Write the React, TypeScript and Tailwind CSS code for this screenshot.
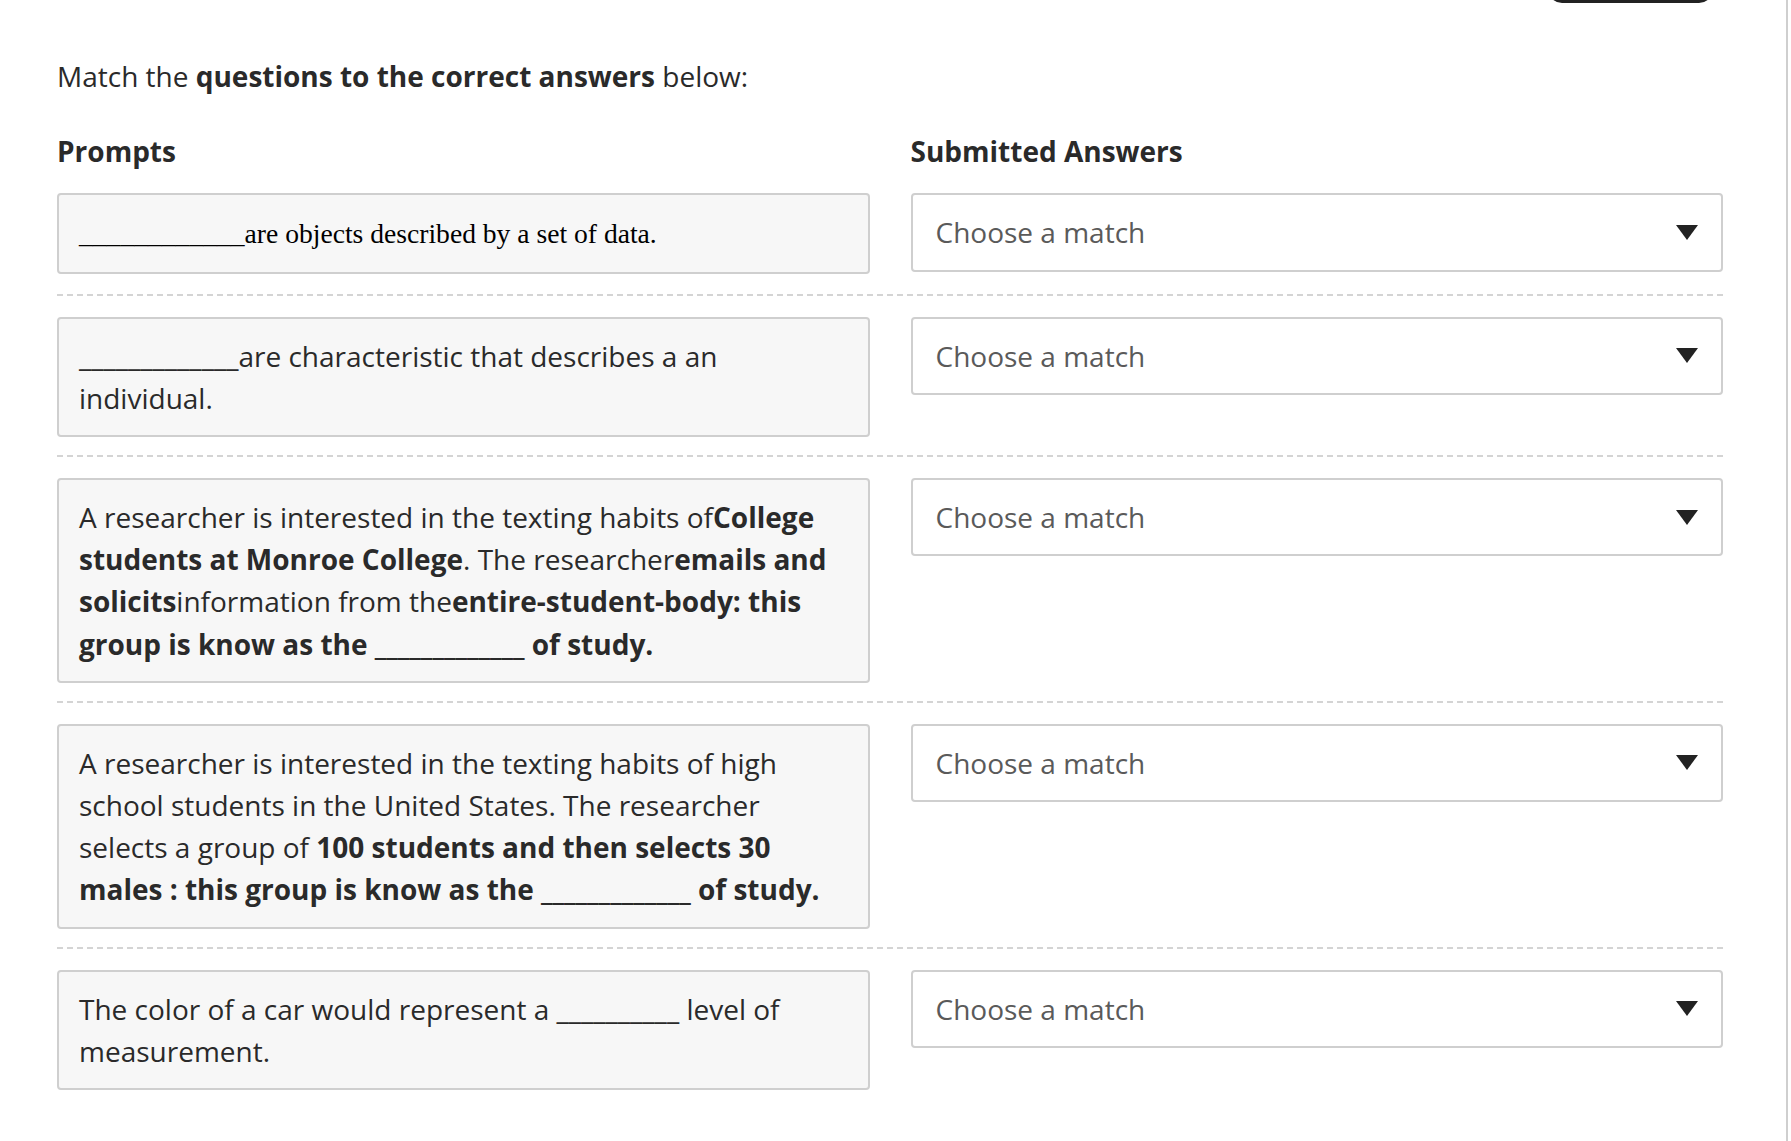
import { ReactNode } from "react";

type Row = {
  prompt: ReactNode;
};

const rows: Row[] = [
  {
    prompt: (
      <span className="font-['Liberation_Serif','Times_New_Roman',serif] text-[27.6px] text-black">
        ____________are objects described by a set of data.
      </span>
    ),
  },
  {
    prompt: <>_____________are characteristic that describes a an individual.</>,
  },
  {
    prompt: (
      <>
        A researcher is interested in the texting habits of<b>College students at Monroe College</b>. The researcher
        <b>emails and solicits</b>information from the<b>entire-student-body: this group is know as the _____________ of study.</b>
      </>
    ),
  },
  {
    prompt: (
      <>
        A researcher is interested in the texting habits of high school students in the United States. The researcher
        selects a group of <b>100 students and then selects 30 males : this group is know as the _____________ of study.</b>
      </>
    ),
  },
  {
    prompt: <>The color of a car would represent a __________ level of measurement.</>,
  },
];

function MatchSelect() {
  return (
    <div className="flex items-center justify-between rounded-[4px] border-2 border-[#cfcfcf] bg-white py-[16px] pl-[23px] pr-[23px]">
      <span className="text-[#5a5a5a]">Choose a match</span>
      <svg width="22" height="15" viewBox="0 0 22 15" className="shrink-0">
        <path d="M0 0 L22 0 L11 15 Z" fill="#222" />
      </svg>
    </div>
  );
}

export default function App() {
  return (
    <div className="h-[1141px] w-full overflow-hidden bg-white">
      <div className="h-full w-[1788px] border-r-2 border-[#cfcfcf] pl-[57px] pr-[63px] font-['Open_Sans',sans-serif] text-[28px] leading-[42.2px] text-[#2a2a2a]">
        <div className="flex justify-end pr-[10px]">
          <div className="-mt-[40px] h-[43px] w-[165px] rounded-[14px] border-[3px] border-[#222]" />
        </div>
        <p className="mt-[52px]">
          Match the <b>questions to the correct answers</b> below:
        </p>
        <div className="mt-[33px] grid grid-cols-2 gap-x-[41px]">
          <h3 className="font-bold">Prompts</h3>
          <h3 className="font-bold">Submitted Answers</h3>
        </div>
        <div className="mt-[21px]">
          {rows.map((row, i) => (
            <div
              key={i}
              className={`grid grid-cols-2 items-start gap-x-[41px] ${i > 0 ? "pt-[21px] pb-[18px]" : "pb-[20px]"} ${
                i < rows.length - 1 ? "border-b-2 border-dashed border-[#d4d4d4]" : ""
              }`}
            >
              <div className="rounded-[4px] border-2 border-[#cfcfcf] bg-[#f7f7f7] px-[20px] py-[16px]">{row.prompt}</div>
              <MatchSelect />
            </div>
          ))}
        </div>
      </div>
    </div>
  );
}
